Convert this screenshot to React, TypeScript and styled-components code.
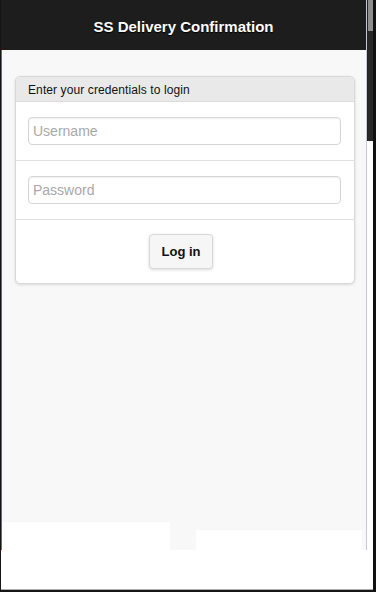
import { useState } from "react";
import { createGlobalStyle, styled } from "styled-components";

const GlobalStyle = createGlobalStyle`
  html, body {
    margin: 0;
    padding: 0;
    background: #ffffff;
  }
  * {
    box-sizing: border-box;
  }
`;

function LoginCard() {
  const [username, setUsername] = useState("");
  const [password, setPassword] = useState("");

  return (
    <CardStyle>
      <CardHeader>Enter your credentials to login</CardHeader>
      <CardRow>
        <TextInput
          type="text"
          placeholder="Username"
          value={username}
          onChange={(e) => setUsername(e.target.value)}
        />
      </CardRow>
      <CardRow>
        <TextInput
          type="password"
          placeholder="Password"
          value={password}
          onChange={(e) => setPassword(e.target.value)}
        />
      </CardRow>
      <CardRow $center $last>
        <LoginButton type="button">Log in</LoginButton>
      </CardRow>
    </CardStyle>
  );
}

function App() {
  return (
    <>
      <GlobalStyle />
      <Frame>
        <Viewport>
          <Screen>
            <Header>SS Delivery Confirmation</Header>
            <Content>
              <LoginCard />
              <Footer>
                <FooterBlock $width={168} $height={28} />
                <FooterBlock $width={166} $height={20} />
              </Footer>
            </Content>
          </Screen>
          <Scrollbar>
            <ScrollThumb />
            <ScrollTrack />
          </Scrollbar>
        </Viewport>
        <BottomArea />
      </Frame>
    </>
  );
}

const Frame = styled.div`
  display: flex;
  flex-direction: column;
  width: 376px;
  height: 592px;
  background: #ffffff;
  border-left: 1px solid #151515;
  border-right: 3px solid #111111;
  border-bottom: 2px solid #151515;
  font-family: "Liberation Sans", Arial, sans-serif;
`;

const Viewport = styled.div`
  display: flex;
  height: 550px;
`;

const Screen = styled.div`
  display: flex;
  flex-direction: column;
  flex: 1;
  min-width: 0;
`;

const Header = styled.div`
  display: flex;
  align-items: center;
  justify-content: center;
  height: 50px;
  padding-top: 2px;
  background: #1d1d1d;
  color: #ffffff;
  font-size: 15px;
  font-weight: bold;
  text-shadow: 0 1px 1px #000000;
`;

const Content = styled.div`
  display: flex;
  flex-direction: column;
  flex: 1;
  background: #f8f8f8;
  border-left: 1px solid #3d6fd2;
`;

const CardStyle = styled.div`
  margin: 26px 11px 0 13px;
  background: #ffffff;
  border: 1px solid #d8d8d8;
  border-radius: 5px;
  box-shadow: 0 1px 3px rgba(0, 0, 0, 0.12);
  overflow: hidden;
`;

const CardHeader = styled.div`
  height: 25px;
  padding: 6px 12px 0;
  background: #e9e9e9;
  border-bottom: 1px solid #dcdcdc;
  color: #111111;
  font-size: 12px;
  letter-spacing: 0.1px;
`;

const CardRow = styled.div<{ $center?: boolean; $last?: boolean }>`
  display: flex;
  justify-content: ${({ $center }) => ($center ? "center" : "flex-start")};
  padding: ${({ $last }) => ($last ? "14px 20px 14px 12px" : "15px 13px 15px 12px")};
  border-bottom: ${({ $last }) => ($last ? "none" : "1px solid #e0e0e0")};
`;

const TextInput = styled.input`
  width: 100%;
  height: 28px;
  padding: 0 4px;
  border: 1px solid #d6d6d6;
  border-radius: 4px;
  background: #ffffff;
  box-shadow: inset 0 1px 2px rgba(0, 0, 0, 0.06);
  color: #222222;
  font-family: "Liberation Sans", Arial, sans-serif;
  font-size: 14px;
  outline: none;

  &::placeholder {
    color: #a8a8a8;
  }
`;

const LoginButton = styled.button`
  width: 64px;
  height: 35px;
  padding: 0;
  border: 1px solid #d8d8d8;
  border-radius: 4px;
  background: #f6f6f6;
  box-shadow: 0 1px 3px rgba(0, 0, 0, 0.15);
  color: #111111;
  font-family: "Liberation Sans", Arial, sans-serif;
  font-size: 13px;
  font-weight: bold;
  cursor: pointer;
`;

const Footer = styled.div`
  display: flex;
  align-items: flex-end;
  gap: 26px;
  margin-top: auto;
`;

const FooterBlock = styled.div<{ $width: number; $height: number }>`
  width: ${({ $width }) => $width}px;
  height: ${({ $height }) => $height}px;
  background: #ffffff;
`;

const Scrollbar = styled.div`
  display: flex;
  flex-direction: column;
  width: 7px;
  border-left: 1px solid #c9cbd3;
  background: #ffffff;
`;

const ScrollThumb = styled.div`
  height: 31px;
  background: #8d8d8d;
  border-left: 1px solid #1c2233;
`;

const ScrollTrack = styled.div`
  height: 110px;
  background: #282828;
  border-left: 1px solid #1c2233;
`;

const BottomArea = styled.div`
  flex: 1;
  background: #ffffff;
  border-bottom: 1px solid #b0b0b0;
`;

export default App;
